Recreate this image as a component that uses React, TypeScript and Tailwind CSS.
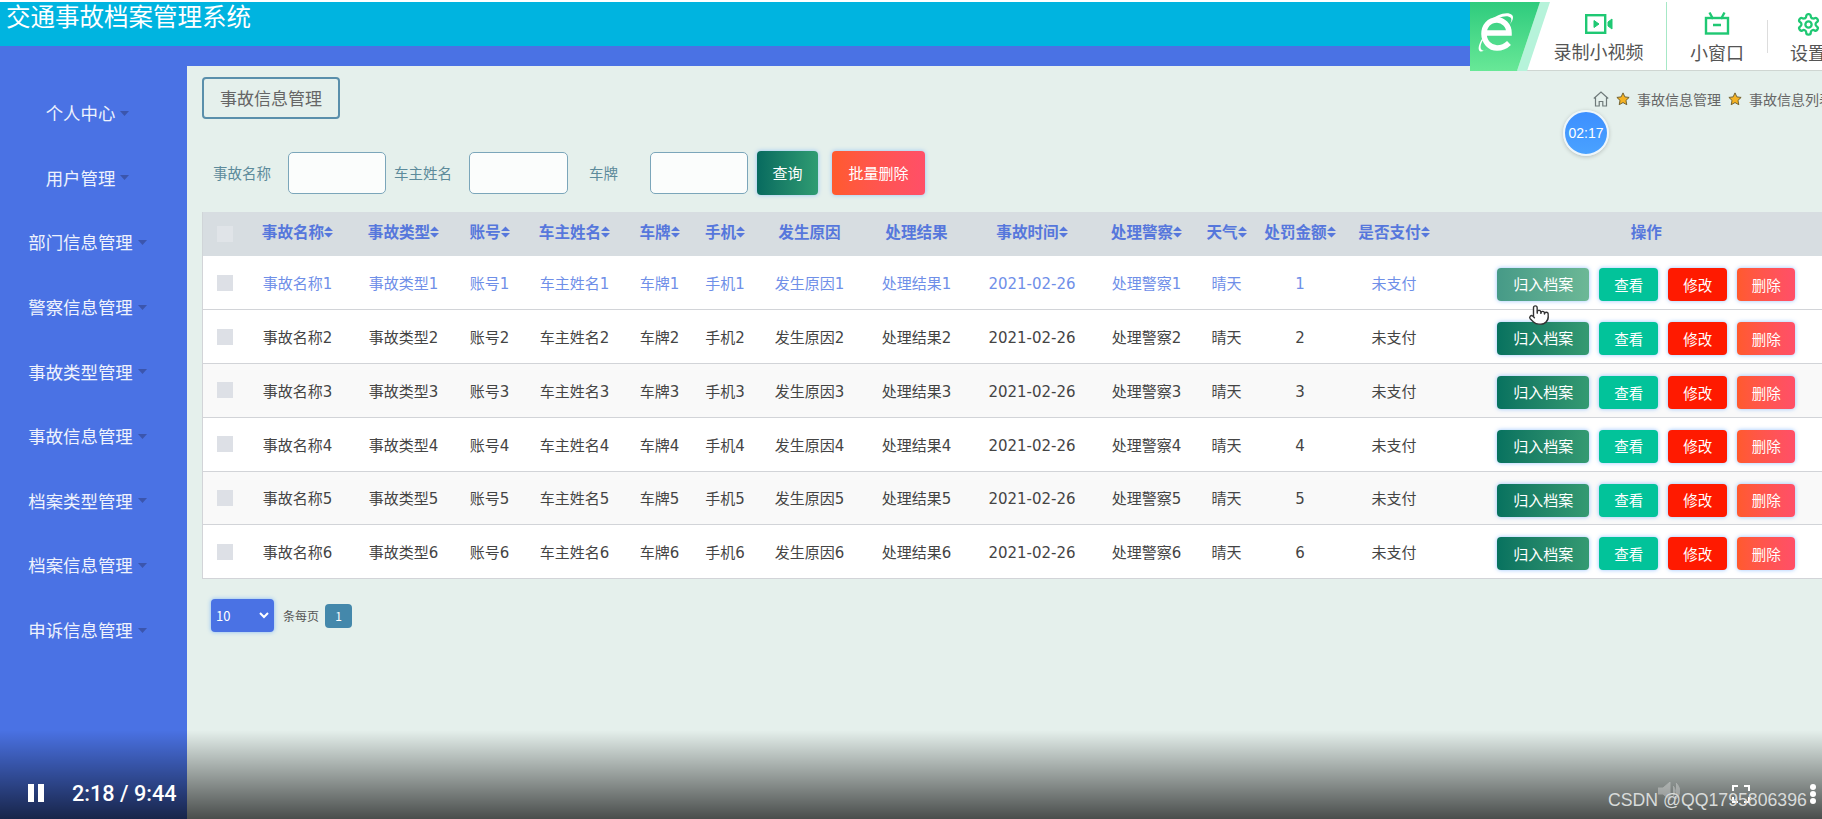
import { Pointer } from "lucide-react";

const font = "font-['Noto_Sans_CJK_SC','Noto_Sans',sans-serif]";

const navItems = [
  "个人中心",
  "用户管理",
  "部门信息管理",
  "警察信息管理",
  "事故类型管理",
  "事故信息管理",
  "档案类型管理",
  "档案信息管理",
  "申诉信息管理",
];

const columns = [
  { label: "事故名称", width: "w-[100px]", sort: true },
  { label: "事故类型", width: "w-[112px]", sort: true },
  { label: "账号", width: "w-[60px]", sort: true },
  { label: "车主姓名", width: "w-[110px]", sort: true },
  { label: "车牌", width: "w-[60px]", sort: true },
  { label: "手机", width: "w-[71px]", sort: true },
  { label: "发生原因", width: "w-[98px]", sort: false },
  { label: "处理结果", width: "w-[116px]", sort: false },
  { label: "事故时间", width: "w-[115px]", sort: true },
  { label: "处理警察", width: "w-[114px]", sort: true },
  { label: "天气", width: "w-[46px]", sort: true },
  { label: "处罚金额", width: "w-[101px]", sort: true },
  { label: "是否支付", width: "w-[87px]", sort: true },
];

const rows = [1, 2, 3, 4, 5, 6];

function rowCells(n: number) {
  return [
    `事故名称${n}`,
    `事故类型${n}`,
    `账号${n}`,
    `车主姓名${n}`,
    `车牌${n}`,
    `手机${n}`,
    `发生原因${n}`,
    `处理结果${n}`,
    "2021-02-26",
    `处理警察${n}`,
    "晴天",
    String(n),
    "未支付",
  ];
}

function SortArrows() {
  return (
    <svg className="inline-block align-[0px]" width="9" height="12" viewBox="0 0 9 12">
      <path d="M4.5 0.5 9 5H0zM4.5 11.5 0 7h9z" fill="#5677dc" />
    </svg>
  );
}

function Caret() {
  return (
    <svg width="9" height="5" viewBox="0 0 9 5">
      <path d="M0 0h9L4.5 5z" fill="#3b55ad" />
    </svg>
  );
}

function ELogo() {
  return (
    <svg className="absolute left-0 top-0" width="84" height="69" viewBox="0 0 84 69">
      <defs>
        <linearGradient id="logoFill" x1="0" y1="0" x2="0" y2="1">
          <stop offset="0" stopColor="#2ecb7d" />
          <stop offset="1" stopColor="#68e897" />
        </linearGradient>
      </defs>
      <path d="M70 0h10L57 69H47z" fill="#b6f3da" />
      <path d="M0 0h70L47 69H0z" fill="url(#logoFill)" />
      <path
        d="M15 31h24c0-8-6-13-12-13-8 0-13 6-13 14s6 14 13 14c5 0 9-2 12-5"
        fill="none"
        stroke="#fff"
        strokeWidth="5.5"
      />
      <path d="M20 22C28 15 37 12 41 16c1 2 0 5-2 7 4-4 5-8 3-10-4-4-15-1-24 7z" fill="#fff" />
      <path d="M13 38c-3 5-3 9-1 10 1 1 3 1 5-1-3 2-7 4-8 1-1-2 0-6 3-11z" fill="#fff" />
    </svg>
  );
}

function RecorderBar() {
  return (
    <div className={`absolute right-0 top-[2px] flex h-[69px] w-[352px] border-b border-[#cfd6d2] bg-white ${font}`}>
      <ELogo />
      <div className="ml-[70px] flex w-[126px] shrink-0 flex-col items-center pr-[9px] pt-[12px]">
        <svg width="28" height="20" viewBox="0 0 28 20" fill="none" stroke="#1fc873" strokeWidth="2.4">
          <rect x="1.2" y="1.2" width="19" height="17.6" />
          <path d="M9 6.5v7l5-3.5z" fill="#1fc873" strokeWidth="1" />
          <path d="M23 8l4-3v10l-4-3z" fill="#1fc873" strokeWidth="1" />
        </svg>
        <span className="mt-[5px] text-[18px] leading-[24px] text-[#555]">录制小视频</span>
      </div>
      <div className="w-px shrink-0 bg-[#a6e8c6]" />
      <div className="flex w-[100px] shrink-0 flex-col items-center pt-[9px]">
        <svg width="26" height="24" viewBox="0 0 26 24" fill="none" stroke="#1fc873" strokeWidth="2.4">
          <rect x="2" y="7" width="22" height="15.5" />
          <path d="M9 8 5.5 1.5M17 8l3.5-6.5M9 14h8" />
        </svg>
        <span className="mt-[5px] text-[18px] leading-[24px] text-[#555]">小窗口</span>
      </div>
      <div className="mt-[18px] h-[33px] w-px shrink-0 bg-[#ddd]" />
      <div className="flex min-w-0 flex-1 flex-col pl-[28px] pt-[10px]">
        <svg className="shrink-0" width="25" height="25" viewBox="0 0 24 24" fill="none" stroke="#1fc873" strokeWidth="2.2">
          <path d="M12.2 2h-.4a2 2 0 0 0-2 2v.2a2 2 0 0 1-1 1.7l-.4.2a2 2 0 0 1-2 0l-.2-.1a2 2 0 0 0-2.7.7l-.2.4a2 2 0 0 0 .7 2.7l.2.1a2 2 0 0 1 1 1.7v.5a2 2 0 0 1-1 1.7l-.2.1a2 2 0 0 0-.7 2.7l.2.4a2 2 0 0 0 2.7.7l.2-.1a2 2 0 0 1 2 0l.4.2a2 2 0 0 1 1 1.7v.2a2 2 0 0 0 2 2h.4a2 2 0 0 0 2-2v-.2a2 2 0 0 1 1-1.7l.4-.2a2 2 0 0 1 2 0l.2.1a2 2 0 0 0 2.7-.7l.2-.4a2 2 0 0 0-.7-2.7l-.2-.1a2 2 0 0 1-1-1.7v-.5a2 2 0 0 1 1-1.7l.2-.1a2 2 0 0 0 .7-2.7l-.2-.4a2 2 0 0 0-2.7-.7l-.2.1a2 2 0 0 1-2 0l-.4-.2a2 2 0 0 1-1-1.7V4a2 2 0 0 0-2-2z" />
          <circle cx="12" cy="12" r="3" />
        </svg>
        <span className="ml-[-6px] mt-[3px] whitespace-nowrap text-[18px] leading-[24px] text-[#555]">设置</span>
      </div>
    </div>
  );
}

function Star() {
  return (
    <svg className="shrink-0" width="14" height="14" viewBox="0 0 24 24">
      <path
        d="M12 1.5l3.2 6.9 7.3.9-5.4 5.1 1.4 7.4L12 18.1l-6.5 3.7 1.4-7.4L1.5 9.3l7.3-.9z"
        fill="#f5b324"
        stroke="#6b5a2a"
        strokeWidth="1.6"
      />
    </svg>
  );
}

function Breadcrumb() {
  return (
    <div className="ml-auto mt-[11px] flex h-[22px] w-[229px] shrink-0 items-center gap-[7px] overflow-x-clip whitespace-nowrap text-[14px] leading-[20px] text-[#666]">
      <svg className="shrink-0" width="16" height="16" viewBox="0 0 16 16" fill="none" stroke="#6f7a7a" strokeWidth="1.2">
        <path d="M0.8 7.5 8 1l7.2 6.5M2.5 6.5V15h3.7v-4.5h3.6V15h3.7V6.5" />
      </svg>
      <Star />
      <span>事故信息管理</span>
      <Star />
      <span>事故信息列表</span>
    </div>
  );
}

function SearchLabel({ text, className }: { text: string; className: string }) {
  return <span className={`text-[14.5px] leading-[42px] text-[#5d8b9b] ${className}`}>{text}</span>;
}

function SearchInput({ className }: { className: string }) {
  return <input className={`h-[42px] rounded-[5px] border border-[#7ba6ba] bg-[#fbfdfc] ${className}`} />;
}

function ActionButton({ text, className }: { text: string; className: string }) {
  return (
    <button className={`h-[33px] rounded-[4px] text-center text-white shadow-[0_0_4px_rgba(70,150,255,0.55)] ${className}`}>
      {text}
    </button>
  );
}

function DataTable() {
  return (
    <table className="mt-[18px] w-[1620px] table-fixed border-collapse bg-white text-center font-['DejaVu_Sans','Noto_Sans_CJK_SC',sans-serif] text-[15px]">
      <thead>
        <tr className="h-[44px] bg-[#d7dde1] text-[#5677dc]">
          <th className="w-[45px] border-l border-[#d0d5d8]">
            <span className="mx-auto block h-[16px] w-[16px] bg-[#e0e4e8]" />
          </th>
          {columns.map((col) => (
            <th className={`${col.width} whitespace-nowrap px-0 text-[15.6px] font-semibold`} key={col.label}>
              {col.label}
              {col.sort ? <SortArrows /> : null}
            </th>
          ))}
          <th className="pl-[33px] text-[15.6px] font-semibold">操作</th>
        </tr>
      </thead>
      <tbody>
        {rows.map((n) => (
          <tr
            className={`h-[53.8px] border-b border-[#d2d4d8] ${n === 1 ? "text-[#6f8fe8]" : "text-[#444]"} ${n % 2 === 1 && n > 1 ? "bg-[#f9f9f9]" : "bg-white"}`}
            key={n}
          >
            <td className="border-l border-[#d2d4d8]">
              <span className="mx-auto block h-[16px] w-[16px] bg-[#dde0e6]" />
            </td>
            {rowCells(n).map((cell, i) => (
              <td className="whitespace-nowrap pt-[3px]" key={i}>
                {cell}
              </td>
            ))}
            <td className="pl-[33px] pt-[4px]">
              <div className="flex justify-center gap-[10px] font-['Noto_Sans_CJK_SC',sans-serif]">
                <ActionButton
                  className={`w-[92px] text-[15px] ${n === 1 ? "bg-linear-to-r from-[#469a87] to-[#6cb896]" : "bg-linear-to-r from-[#07725f] to-[#349a72]"}`}
                  text="归入档案"
                />
                <ActionButton className="w-[59px] bg-[#02c39a] text-[14.5px]" text="查看" />
                <ActionButton className="w-[59px] bg-[#ff1a00] text-[14.5px]" text="修改" />
                <ActionButton className="w-[58px] bg-linear-to-r from-[#ff5a2d] to-[#ff4f68] text-[14.5px]" text="删除" />
              </div>
            </td>
          </tr>
        ))}
      </tbody>
    </table>
  );
}

function VideoControls() {
  return (
    <div className="pointer-events-none absolute bottom-0 left-0 h-[89px] w-full bg-linear-to-b from-[rgba(0,0,0,0)] to-[rgba(0,0,0,0.68)]">
      <div className="absolute bottom-[17px] left-[28px] flex h-[18px] w-[16px] justify-between">
        <span className="w-[6px] bg-white" />
        <span className="w-[6px] bg-white" />
      </div>
      <span className="absolute bottom-[11px] left-[72px] font-['Roboto',sans-serif] text-[21.7px] font-medium leading-[28px] text-white">
        2:18 / 9:44
      </span>
      <svg className="absolute bottom-[19px] left-[1658px] opacity-30" width="22" height="18" viewBox="0 0 22 18">
        <path d="M0 6h5l7-6v18l-7-6H0zM15 4c3 3 3 7 0 10M18 1c5 5 5 11 0 16" fill="#fff" stroke="#fff" />
      </svg>
      <svg className="absolute bottom-[16px] left-[1732px]" width="18" height="18" viewBox="0 0 18 18" fill="none" stroke="#fff" strokeWidth="2">
        <path d="M1 6V1h5M12 1h5v5M17 12v5h-5M6 17H1v-5" />
      </svg>
      <div className="absolute bottom-[15px] left-[1810px] flex h-[20px] flex-col justify-between">
        <span className="h-[6px] w-[6px] rounded-full bg-white" />
        <span className="h-[6px] w-[6px] rounded-full bg-white" />
        <span className="h-[6px] w-[6px] rounded-full bg-white" />
      </div>
      <span className="absolute bottom-[7px] left-[1608px] font-['Liberation_Sans',sans-serif] text-[17.7px] leading-[24px] text-[#d8dbda]">
        CSDN @QQ1795806396
      </span>
    </div>
  );
}

export default function App() {
  return (
    <div className={`relative h-[819px] w-[1822px] overflow-hidden bg-white pt-[2px] ${font}`}>
      <header className="h-[44px] bg-[#00b4e0] pl-[6px] text-[24.5px] leading-[28px] text-white">交通事故档案管理系统</header>

      <div className="flex h-[773px] bg-[#4a72e4]">
        <nav className="w-[187px] shrink-0 pr-[12px] pt-[35px]">
          {navItems.map((item) => (
            <div className="flex h-[64.6px] items-center justify-center gap-[5px] text-[17.4px] text-[#eef2fd]" key={item}>
              {item}
              <Caret />
            </div>
          ))}
        </nav>

        <main className="mt-[20px] min-w-0 flex-1 bg-[#e5f0ec] pl-[15px] pt-[11px]">
          <div className="flex h-[42px]">
            <button className="h-[42px] w-[138px] rounded-[4px] border-2 border-[#5a8fab] text-[17px] text-[#666]">
              事故信息管理
            </button>
            <Breadcrumb />
          </div>

          <div className="mt-[33px] flex h-[42px] items-center">
            <SearchLabel className="ml-[11px] w-[75px]" text="事故名称" />
            <SearchInput className="w-[98px]" />
            <SearchLabel className="ml-[8px] w-[75px]" text="车主姓名" />
            <SearchInput className="w-[99px]" />
            <SearchLabel className="ml-[21px] w-[61px]" text="车牌" />
            <SearchInput className="w-[98px]" />
            <button className="ml-[9px] h-[44px] w-[61px] shrink-0 rounded-[4px] bg-linear-to-r from-[#076b5f] to-[#2f9c72] text-[15px] text-white shadow-[0_0_4px_rgba(70,150,255,0.5)]">
              查询
            </button>
            <button className="ml-[14px] h-[44px] w-[93px] shrink-0 rounded-[4px] bg-linear-to-r from-[#ff5a2d] to-[#ff4f68] text-[15px] text-white shadow-[0_0_4px_rgba(70,150,255,0.5)]">
              批量删除
            </button>
          </div>

          <DataTable />

          <div className="mt-[20px] flex items-center pl-[9px]">
            <div className="flex h-[33px] w-[63px] items-center justify-between rounded-[4px] bg-[#4a72e4] px-[5px] text-[13px] text-white shadow-[0_0_4px_rgba(70,150,255,0.6)]">
              10
              <svg width="10" height="7" viewBox="0 0 10 7" fill="none" stroke="#fff" strokeWidth="2">
                <path d="M1 1l4 4 4-4" />
              </svg>
            </div>
            <span className="ml-[9px] text-[12px] text-[#555]">条每页</span>
            <span className="ml-[6px] flex h-[24px] w-[27px] items-center justify-center rounded-[4px] bg-[#4488ab] text-[12px] text-white">
              1
            </span>
          </div>
        </main>
      </div>

      <RecorderBar />

      <div className="absolute left-[1563px] top-[110px] flex h-[46px] w-[46px] items-center justify-center rounded-full border-2 border-[#eef6fb] bg-linear-to-b from-[#3d8fff] to-[#4aa2ff] font-['Liberation_Sans',sans-serif] text-[14px] text-white shadow-[0_1px_4px_rgba(0,0,0,0.2)]">
        02:17
      </div>

      <Pointer className="absolute left-[1528px] top-[304px]" size={22} fill="#fff" stroke="#333" strokeWidth={1.5} />

      <VideoControls />
    </div>
  );
}
